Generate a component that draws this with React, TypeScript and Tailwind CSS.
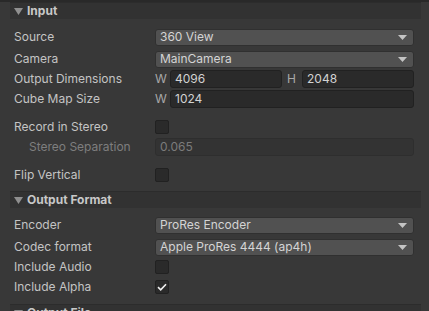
import React from "react";

const Arrow = () => (
  <svg width="9" height="5" viewBox="0 0 9 5" className="shrink-0">
    <path d="M0 0H9L4.5 5Z" fill="#c4c4c4" />
  </svg>
);

const Header = ({ title, className = "" }: { title: string; className?: string }) => (
  <div className={`ml-[10px] w-[411px] h-[17px] bg-[#323232] border-t border-[#2c2c2c] flex items-center ${className}`}>
    <svg width="9" height="7" viewBox="0 0 9 7" className="ml-[4px] shrink-0">
      <path d="M0 0H9L4.5 7Z" fill="#8f8f8f" />
    </svg>
    <span className="ml-[4px] font-bold text-[#c8c8c8] leading-none">{title}</span>
  </div>
);

const Row = ({
  label,
  children,
  className = "",
  dim = false,
}: {
  label: string;
  children?: React.ReactNode;
  className?: string;
  dim?: boolean;
}) => (
  <div className={`h-[20px] flex items-center pl-[14px] pr-[15px] ${className}`}>
    <span
      className={`w-[141px] shrink-0 whitespace-nowrap ${
        dim ? "pl-[15px] text-[#7e7e7e]" : "text-[#c4c4c4]"
      }`}
    >
      {label}
    </span>
    <div className="flex-1 flex items-center">{children}</div>
  </div>
);

const Popup = ({ value }: { value: string }) => (
  <div className="w-full h-[17px] rounded-[3px] bg-[#515151] border border-[#303030] flex items-center justify-between pl-[4px] pr-[6px] text-[#d4d4d4]">
    <span className="leading-none">{value}</span>
    <Arrow />
  </div>
);

const Field = ({ value, disabled = false }: { value: string; disabled?: boolean }) => (
  <div
    className={`flex-1 h-[18px] rounded-[3px] border flex items-center pl-[4px] ${
      disabled
        ? "bg-[#333333] border-[#2e2e2e] text-[#7b7b7b]"
        : "bg-[#2a2a2a] border-[#212121] text-[#d2d2d2]"
    }`}
  >
    <span className="leading-none">{value}</span>
  </div>
);

const Check = ({ checked = false }: { checked?: boolean }) => (
  <div className="w-[14px] h-[14px] rounded-[2px] bg-[#2a2a2a] border border-[#212121] flex items-center justify-center">
    {checked && (
      <svg width="10" height="8" viewBox="0 0 10 8">
        <path d="M1 4.2L3.7 6.8L9 1.2" stroke="#f0f0f0" strokeWidth="1.6" fill="none" />
      </svg>
    )}
  </div>
);

export default function App() {
  return (
    <div
      className="w-[429px] h-[311px] overflow-hidden bg-[#383838] text-[12px]"
      style={{ fontFamily: "Inter, 'Noto Sans', sans-serif" }}
    >
      <div className="h-[2px] bg-[#292929]" />
      <Header title="Input" className="h-[14px]" />

      <Row label="Source" className="mt-[8px]">
        <Popup value="360 View" />
      </Row>
      <Row label="Camera" className="mt-[2px]">
        <Popup value="MainCamera" />
      </Row>
      <Row label="Output Dimensions">
        <span className="w-[15px] text-[#a8a8a8]">W</span>
        <Field value="4096" />
        <span className="w-[20px] pl-[5px] text-[#a8a8a8]">H</span>
        <Field value="2048" />
      </Row>
      <Row label="Cube Map Size">
        <span className="w-[15px] text-[#a8a8a8]">W</span>
        <Field value="1024" />
      </Row>

      <Row label="Record in Stereo" className="mt-[8px]">
        <Check />
      </Row>
      <Row label="Stereo Separation" dim>
        <Field value="0.065" disabled />
      </Row>
      <Row label="Flip Vertical" className="mt-[8px]">
        <Check />
      </Row>

      <Header title="Output Format" className="mt-[6px]" />

      <Row label="Encoder" className="mt-[7px]">
        <Popup value="ProRes Encoder" />
      </Row>
      <Row label="Codec format" className="mt-[2px]">
        <Popup value="Apple ProRes 4444 (ap4h)" />
      </Row>
      <Row label="Include Audio">
        <Check />
      </Row>
      <Row label="Include Alpha">
        <Check checked />
      </Row>

      <Header title="Output File" className="mt-[7px]" />
    </div>
  );
}
